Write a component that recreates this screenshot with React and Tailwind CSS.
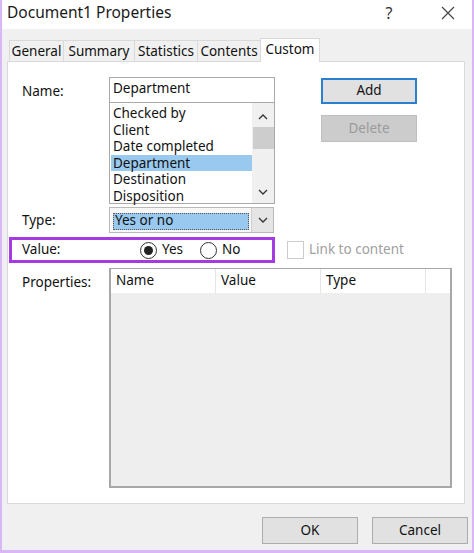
import React from "react";

const font = { fontFamily: '"Noto Sans", "Open Sans", sans-serif' };

function Chevron({ dir = "down", className = "" }) {
  return (
    <svg width="10" height="6" viewBox="0 0 10 6" className={className}>
      {dir === "down" ? (
        <path d="M1 1 L5 5 L9 1" fill="none" stroke="#333" strokeWidth="1.3" />
      ) : (
        <path d="M1 5 L5 1 L9 5" fill="none" stroke="#333" strokeWidth="1.3" />
      )}
    </svg>
  );
}

const tabs = [
  { label: "General", w: "w-[54px]" },
  { label: "Summary", w: "w-[71px]" },
  { label: "Statistics", w: "w-[63px]" },
  { label: "Contents", w: "w-[63px]" },
];

const items = ["Checked by", "Client", "Date completed", "Department", "Destination", "Disposition"];

export default function App() {
  return (
    <div
      style={font}
      className="w-[474px] h-[553px] bg-[#f0f0f0] border-l-2 border-r-2 border-b-[3px] border-[#d9b6f6] flex flex-col text-[13.5px] text-[#111] overflow-hidden"
    >
      {/* Title bar */}
      <div className="h-[29px] bg-white flex items-center shrink-0">
        <div className="pl-[5px] text-[15.5px] text-[#1a1a1a] flex-1 leading-none pb-[3px]">Document1 Properties</div>
        <div className="w-[20px] text-center text-[16px] text-[#333] mr-[42px] pb-[4px]">?</div>
        <svg width="14" height="14" viewBox="0 0 14 14" className="mr-[17px] mb-[3px]">
          <path d="M1 1 L13 13 M13 1 L1 13" stroke="#444" strokeWidth="1.2" />
        </svg>
      </div>

      {/* Tabs */}
      <div className="flex items-end pt-[9px] pl-[7px] h-[32px] shrink-0">
        {tabs.map((t) => (
          <div
            key={t.label}
            className={`${t.w} h-[21px] border-t border-l border-[#d9d9d9] bg-[#f0f0f0] flex items-center justify-center leading-none pt-[1px]`}
          >
            {t.label}
          </div>
        ))}
        <div className="w-[60px] h-[24px] border-t border-l border-r border-[#d9d9d9] bg-white flex items-center justify-center leading-none pb-[2px] -mb-[1px] relative z-10">
          Custom
        </div>
      </div>

      {/* Panel */}
      <div className="ml-[5px] mr-[7px] h-[443px] bg-white border border-[#d9d9d9] flex flex-col shrink-0">
        {/* Name row */}
        <div className="flex pt-[15px]">
          <div className="w-[101px] pl-[14px] pt-[4px]">Name:</div>
          <div className="w-[166px] flex flex-col">
            <div className="h-[26px] border border-[#a9a9a9] flex items-center pl-[3px] leading-none pb-[2px]">Department</div>
            <div className="h-[101px] border border-t-0 border-[#a9a9a9] flex">
              <div className="flex-1 pt-[2px] pl-[1px]">
                {items.map((it) => (
                  <div
                    key={it}
                    className={`h-[16.5px] leading-[16px] pl-[2px] ${it === "Department" ? "bg-[#99c9ef]" : ""}`}
                  >
                    {it}
                  </div>
                ))}
              </div>
              <div className="w-[22px] flex flex-col items-center bg-[#f0f0f0] pt-[11px]">
                <Chevron dir="up" />
                <div className="w-[21px] h-[22px] bg-[#cdcdcd] mt-[7px]" />
                <div className="flex-1" />
                <Chevron dir="down" className="mb-[8px]" />
              </div>
            </div>
          </div>
          <div className="ml-[46px] pt-[1px] flex flex-col">
            <div className="w-[96px] h-[26px] border-2 border-[#2a7fcf] bg-[#e1e1e1] flex items-center justify-center leading-none">
              Add
            </div>
            <div className="w-[96px] h-[27px] mt-[11px] border border-[#bfbfbf] bg-[#cccccc] text-[#9a9a9a] flex items-center justify-center leading-none">
              Delete
            </div>
          </div>
        </div>

        {/* Type row */}
        <div className="flex items-center mt-[3px]">
          <div className="w-[101px] pl-[14px]">Type:</div>
          <div className="w-[165px] h-[26px] border border-[#b9b9b9] bg-[#f7f7f7] flex items-stretch p-[3px] pr-0 pt-[5px] pb-[2px]">
            <div className="w-[136px] bg-[#99c9ef] border border-dotted border-[#555] flex items-center pl-[1px] leading-none pb-[1px]">
              Yes or no
            </div>
            <div className="flex-1 flex items-center justify-center -mt-[5px] -mb-[2px] ml-[2px] bg-[#e5e5e5] border-l border-[#cfcfcf]">
              <Chevron dir="down" />
            </div>
          </div>
        </div>

        {/* Value row */}
        <div className="flex items-center mt-[4px]">
          <div className="ml-[1px] w-[266px] h-[26px] border-[3px] border-[#a43ae4] flex items-center">
            <div className="w-[98px] pl-[10px] leading-none">Value:</div>
            <div className="flex items-center ml-[30px]">
              <div className="w-[17px] h-[17px] rounded-full border border-[#333] flex items-center justify-center">
                <div className="w-[9px] h-[9px] rounded-full bg-[#222]" />
              </div>
              <span className="ml-[5px] leading-none">Yes</span>
            </div>
            <div className="flex items-center ml-[17px]">
              <div className="w-[17px] h-[17px] rounded-full border border-[#333]" />
              <span className="ml-[5px] leading-none">No</span>
            </div>
          </div>
          <div className="ml-[12px] w-[17px] h-[18px] border border-[#cccccc] bg-white" />
          <span className="ml-[5px] text-[#a0a0a0] leading-none">Link to content</span>
        </div>

        {/* Properties row */}
        <div className="flex mt-[5px]">
          <div className="w-[101px] pl-[14px] pt-[4px]">Properties:</div>
          <div className="w-[343px] h-[220px] border-2 border-[#a8a8a8] border-t border-l-2 bg-[#eeeeee] flex flex-col">
            <div className="h-[24px] bg-white flex shrink-0">
              <div className="w-[105px] border-r border-[#e5e5e5] pl-[5px] flex items-center leading-none">Name</div>
              <div className="w-[105px] border-r border-[#e5e5e5] pl-[5px] flex items-center leading-none">Value</div>
              <div className="w-[105px] border-r border-[#e5e5e5] pl-[5px] flex items-center leading-none">Type</div>
              <div className="flex-1" />
            </div>
          </div>
        </div>
      </div>

      {/* Buttons */}
      <div className="flex justify-end mt-[13px] mr-[4px] gap-[14px]">
        <div className="w-[96px] h-[27px] border border-[#adadad] bg-[#e1e1e1] flex items-center justify-center leading-none">
          OK
        </div>
        <div className="w-[96px] h-[27px] border border-[#adadad] bg-[#e1e1e1] flex items-center justify-center leading-none">
          Cancel
        </div>
      </div>
    </div>
  );
}
